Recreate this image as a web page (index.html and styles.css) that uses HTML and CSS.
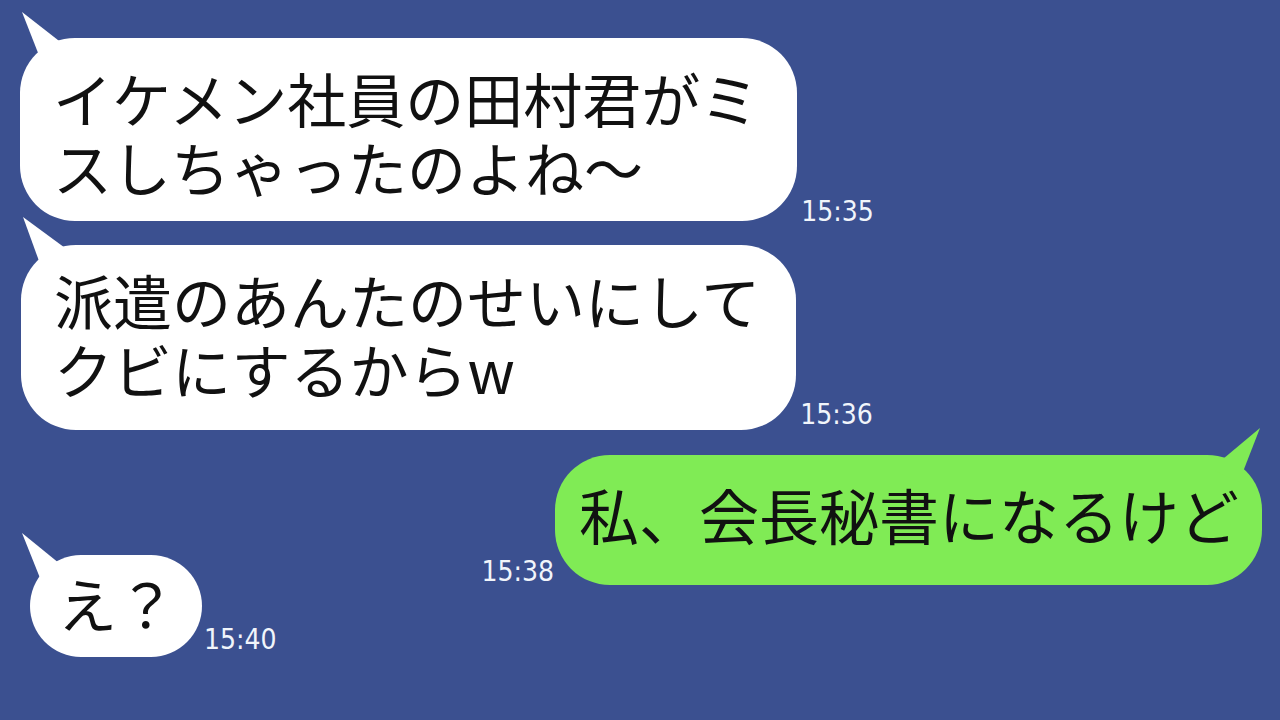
FILE: index.html
```html
<!DOCTYPE html>
<html lang="ja">
<head>
<meta charset="utf-8">
<title>chat</title>
<link rel="stylesheet" href="styles.css">
</head>
<body>
<main class="chat">
  <div class="row row-1">
    <div class="bubble bubble-in b1">
      <svg class="tail tail-in" viewBox="0 0 70 70" width="70" height="70"><polygon points="12,4 62,43 32,55"/></svg>
      <p class="msg">イケメン社員の田村君がミ<br>スしちゃったのよね〜</p>
    </div>
    <span class="time t1">15:35</span>
  </div>
  <div class="row row-2">
    <div class="bubble bubble-in b2">
      <svg class="tail tail-in" viewBox="0 0 70 70" width="70" height="70"><polygon points="12,2 65,41 32,57"/></svg>
      <p class="msg">派遣のあんたのせいにして<br>クビにするからw</p>
    </div>
    <span class="time t2">15:36</span>
  </div>
  <div class="row row-3">
    <span class="time t3">15:38</span>
    <div class="bubble bubble-out b3">
      <svg class="tail tail-out" viewBox="0 0 70 70" width="70" height="70"><polygon points="58,3 9,44 37,57"/></svg>
      <p class="msg msg-out">私、会長秘書になるけど</p>
    </div>
  </div>
  <div class="row row-4">
    <div class="bubble bubble-in b4">
      <svg class="tail tail-in" viewBox="0 0 70 70" width="70" height="70"><polygon points="2,8 45,43 22,58"/></svg>
      <p class="msg">え？</p>
    </div>
    <span class="time t4">15:40</span>
  </div>
</main>
</body>
</html>
```

FILE: styles.css
```css
html, body {
  margin: 0;
  padding: 0;
}

body {
  width: 1280px;
  height: 720px;
  overflow: hidden;
  background: #3b5090;
  font-family: "Noto Sans CJK JP", "Noto Sans", sans-serif;
}

.chat {
  display: flex;
  flex-direction: column;
  padding-top: 38px;
}

.row {
  display: flex;
  align-items: flex-end;
}

.row-1 { padding-left: 20px; }
.row-2 { padding-left: 21px; margin-top: 24px; }
.row-3 { justify-content: flex-end; padding-right: 18px; margin-top: 25px; }
.row-4 { padding-left: 30px; margin-top: -30px; }

.bubble {
  position: relative;
  border-radius: 55px;
}

.bubble-in { background: #ffffff; }
.bubble-out { background: #80eb55; }

.tail {
  position: absolute;
  top: -30px;
  display: block;
}

.tail-in { left: -10px; fill: #ffffff; }
.tail-out { right: -10px; fill: #80eb55; }

.msg {
  position: relative;
  margin: 0;
  font-size: 59px;
  line-height: 69px;
  color: #111111;
  white-space: nowrap;
}

.msg-out { font-size: 60px; }

.b1 { padding: 25px 38px 20px 33px; }
.b2 { padding: 20px 36px 27px 33px; }
.b3 { padding: 24px 23px 37px 24px; }
.b4 { padding: 13px 26px 20px 28px; border-radius: 51px; }

.time {
  font-family: "DejaVu Sans Condensed", "DejaVu Sans", sans-serif;
  font-stretch: condensed;
  font-size: 28px;
  line-height: 28px;
  color: #f1f5fb;
  white-space: nowrap;
}

.t1 { margin-left: 4px; margin-bottom: -5px; }
.t2 { margin-left: 4px; margin-bottom: 1px; }
.t3 { margin-right: 1px; margin-bottom: -1px; }
.t4 { margin-left: 2px; margin-bottom: 3px; }
```
